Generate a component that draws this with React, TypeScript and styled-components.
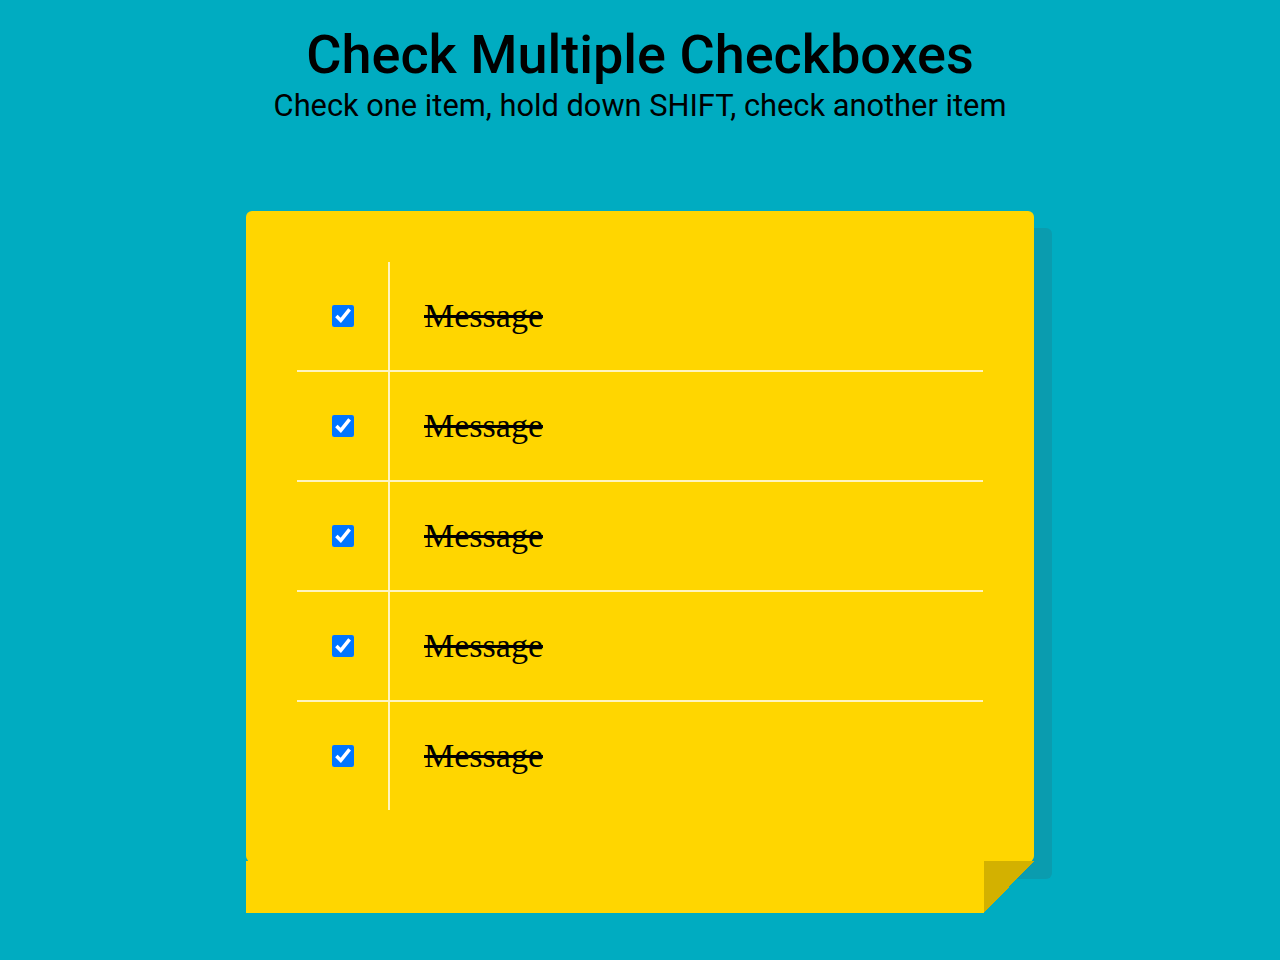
import React from "react";
import styled, { createGlobalStyle } from "styled-components";

const GlobalStyle = createGlobalStyle`
  html, body {
    margin: 0;
    padding: 0;
    background: #00acc1;
  }
  body {
    font-family: Roboto, "Noto Sans", sans-serif;
  }
`;

const Page = styled.div`
  display: flex;
  flex-direction: column;
  align-items: center;
  padding-top: 24px;
`;

const Title = styled.h1`
  margin: 0;
  font-size: 54px;
  font-weight: 500;
  line-height: 62px;
  color: #000;
`;

const Subtitle = styled.p`
  margin: 2px 0 0;
  font-size: 30.8px;
  font-weight: 400;
  line-height: 36px;
  color: #000;
`;

const Sheet = styled.div`
  margin-top: 87px;
  width: 788px;
  display: flex;
  flex-direction: column;
`;

const Card = styled.div`
  background: #ffd600;
  border-radius: 6px;
  box-shadow: 18px 17px 0 #0a9caf;
  padding: 51px 51px 52px;
`;

const Footer = styled.div`
  display: flex;
  height: 52px;
  margin-top: -1px;
`;

const Strip = styled.div`
  flex: 1;
  background: #ffd600;
`;

const Fold = styled.div`
  width: 50px;
  background: linear-gradient(to bottom right, #d3b100 50%, transparent 50%);
`;

const List = styled.div`
  display: flex;
  flex-direction: column;
`;

const Item = styled.label<{ $last?: boolean }>`
  display: flex;
  align-items: stretch;
  height: 108px;
  border-bottom: ${(p) => (p.$last ? "none" : "2px solid rgba(255, 255, 255, 0.75)")};
`;

const BoxCell = styled.div`
  width: 91px;
  display: flex;
  align-items: center;
  justify-content: center;
  border-right: 2px solid rgba(255, 255, 255, 0.75);
`;

const Checkbox = styled.input`
  width: 22px;
  height: 22px;
  margin: 0;
`;

const Text = styled.p<{ $done: boolean }>`
  margin: 0;
  padding-left: 34px;
  display: flex;
  align-items: center;
  font-family: "Liberation Serif", "Times New Roman", serif;
  font-size: 34px;
  color: #000;
  text-decoration: ${(p) => (p.$done ? "line-through" : "none")};
`;

const App: React.FC = () => {
  const [checked, setChecked] = React.useState<boolean[]>([true, true, true, true, true]);

  const toggle = (i: number) => {
    setChecked((prev) => prev.map((c, idx) => (idx === i ? !c : c)));
  };

  return (
    <>
      <GlobalStyle />
      <Page>
        <Title>Check Multiple Checkboxes</Title>
        <Subtitle>Check one item, hold down SHIFT, check another item</Subtitle>
        <Sheet>
          <Card>
            <List>
              {checked.map((c, i) => (
                <Item key={i} $last={i === checked.length - 1}>
                  <BoxCell>
                    <Checkbox type="checkbox" checked={c} onChange={() => toggle(i)} />
                  </BoxCell>
                  <Text $done={c}>Message</Text>
                </Item>
              ))}
            </List>
          </Card>
          <Footer>
            <Strip />
            <Fold />
          </Footer>
        </Sheet>
      </Page>
    </>
  );
};

export default App;
